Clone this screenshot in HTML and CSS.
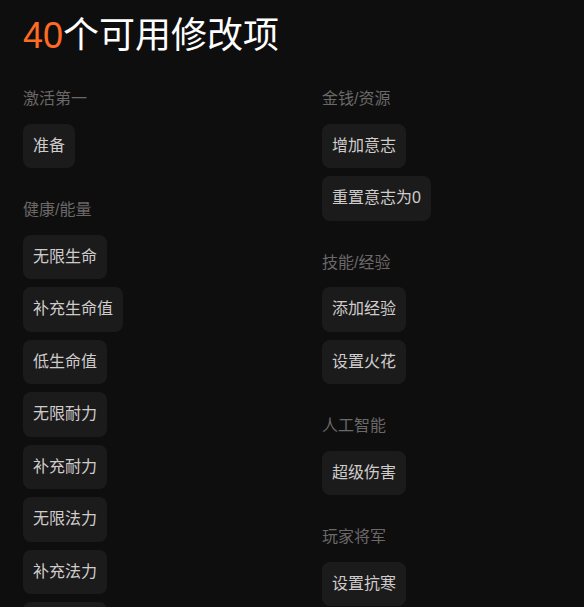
FILE: index.html
```html
<!DOCTYPE html>
<html lang="zh-CN">
<head>
<meta charset="utf-8">
<title>40个可用修改项</title>
<link rel="stylesheet" href="styles.css">
</head>
<body>
<main class="page">
  <h1 class="title"><span class="count">40</span>个可用修改项</h1>
  <div class="columns">
    <div class="column">
      <section class="group">
        <h2 class="group-label">激活第一</h2>
        <div class="items">
          <button class="item">准备</button>
        </div>
      </section>
      <section class="group">
        <h2 class="group-label">健康/能量</h2>
        <div class="items">
          <button class="item">无限生命</button>
          <button class="item">补充生命值</button>
          <button class="item">低生命值</button>
          <button class="item">无限耐力</button>
          <button class="item">补充耐力</button>
          <button class="item">无限法力</button>
          <button class="item">补充法力</button>
          <button class="item">低法力值</button>
        </div>
      </section>
    </div>
    <div class="column">
      <section class="group">
        <h2 class="group-label">金钱/资源</h2>
        <div class="items">
          <button class="item">增加意志</button>
          <button class="item">重置意志为0</button>
        </div>
      </section>
      <section class="group">
        <h2 class="group-label">技能/经验</h2>
        <div class="items">
          <button class="item">添加经验</button>
          <button class="item">设置火花</button>
        </div>
      </section>
      <section class="group">
        <h2 class="group-label">人工智能</h2>
        <div class="items">
          <button class="item">超级伤害</button>
        </div>
      </section>
      <section class="group">
        <h2 class="group-label">玩家将军</h2>
        <div class="items">
          <button class="item">设置抗寒</button>
        </div>
      </section>
    </div>
  </div>
</main>
</body>
</html>
```

FILE: styles.css
```css
html, body {
  margin: 0;
  padding: 0;
  background: #0f0e0e;
  overflow: hidden;
}

body {
  font-family: "Liberation Sans", "Noto Sans CJK SC", sans-serif;
}

.page {
  padding: 14px 23px 0;
}

.title {
  margin: 0;
  font-size: 36px;
  line-height: 43px;
  font-weight: 400;
  color: #ffffff;
}

.count {
  color: #ff6b24;
}

.columns {
  display: grid;
  grid-template-columns: 1fr 1fr;
  column-gap: 60px;
  margin-top: 32px;
}

.column {
  display: flex;
  flex-direction: column;
  gap: 32px;
}

.group-label {
  margin: 0 0 14.5px;
  font-size: 16px;
  line-height: 20px;
  font-weight: 400;
  color: #6a6868;
}

.items {
  display: flex;
  flex-direction: column;
  align-items: flex-start;
  gap: 8px;
}

.item {
  font-family: inherit;
  font-size: 16px;
  line-height: 24px;
  color: #cfcccc;
  background: #1c1b1b;
  border: none;
  border-radius: 8px;
  padding: 10px 10px;
  height: 44.5px;
  cursor: pointer;
}
```
